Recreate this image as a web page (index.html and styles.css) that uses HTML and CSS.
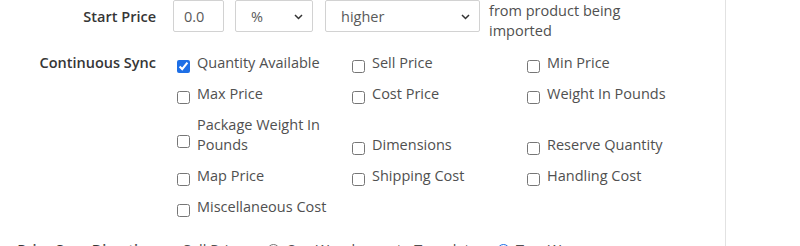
FILE: index.html
```html
<!DOCTYPE html>
<html>
<head>
<meta charset="utf-8">
<link rel="stylesheet" href="styles.css">
</head>
<body>
<div class="panel">
  <div class="row row-price">
    <div class="label label-tall">Start Price</div>
    <div class="controls">
      <input class="txt" type="text" value="0.0">
      <div class="sel sel-sm">
        <select><option>%</option></select>
        <svg class="chev" width="9" height="6" viewBox="0 0 9 6"><path d="M1 1l3.5 3.5L8 1" fill="none" stroke="#333" stroke-width="1.5"/></svg>
      </div>
      <div class="sel sel-lg">
        <select><option>higher</option></select>
        <svg class="chev" width="9" height="6" viewBox="0 0 9 6"><path d="M1 1l3.5 3.5L8 1" fill="none" stroke="#333" stroke-width="1.5"/></svg>
      </div>
      <div class="note">from product being imported</div>
    </div>
  </div>

  <div class="row row-sync">
    <div class="label">Continuous Sync</div>
    <div class="checks">
      <label class="chk"><input type="checkbox" checked><span>Quantity Available</span></label>
      <label class="chk"><input type="checkbox"><span>Sell Price</span></label>
      <label class="chk"><input type="checkbox"><span>Min Price</span></label>
      <label class="chk"><input type="checkbox"><span>Max Price</span></label>
      <label class="chk"><input type="checkbox"><span>Cost Price</span></label>
      <label class="chk"><input type="checkbox"><span>Weight In Pounds</span></label>
      <label class="chk chk-multi"><input type="checkbox"><span>Package Weight In Pounds</span></label>
      <label class="chk"><input type="checkbox"><span>Dimensions</span></label>
      <label class="chk"><input type="checkbox"><span>Reserve Quantity</span></label>
      <label class="chk"><input type="checkbox"><span>Map Price</span></label>
      <label class="chk"><input type="checkbox"><span>Shipping Cost</span></label>
      <label class="chk"><input type="checkbox"><span>Handling Cost</span></label>
      <label class="chk"><input type="checkbox"><span>Miscellaneous Cost</span></label>
    </div>
  </div>

  <div class="row row-dir">
    <div class="label">Price Sync Direction</div>
    <div class="radios">
      <span class="sub">Sell Price</span>
      <label class="rad rad-1"><input type="radio" name="dir"><span>Our Warehouse to Template</span></label>
      <label class="rad"><input type="radio" name="dir" checked><span>Two Way</span></label>
    </div>
  </div>
</div>
</body>
</html>
```

FILE: styles.css
```css
html, body {
  margin: 0;
  padding: 0;
  background: #fff;
  height: 246px;
  overflow: hidden;
}
body {
  font-family: "Open Sans", "Liberation Sans", sans-serif;
  font-size: 14.5px;
  color: #505050;
}
.panel {
  width: 726px;
  height: 246px;
  border-right: 1px solid #e2e2e2;
  box-sizing: border-box;
}
.row {
  display: grid;
  grid-template-columns: 156px 1fr;
  column-gap: 17px;
  align-items: start;
}
.label {
  text-align: right;
  font-weight: 600;
  font-size: 14.5px;
  color: #363636;
  line-height: 20px;
  white-space: nowrap;
}
.label-tall {
  line-height: 32px;
  padding-top: 1px;
}
.controls {
  display: flex;
  align-items: flex-start;
}
.txt {
  width: 51px;
  height: 32px;
  box-sizing: border-box;
  border: 1px solid #d2d2d2;
  border-radius: 2px;
  padding: 0 0 0 10px;
  font: inherit;
  color: #5a5a5a;
  margin: 0 11px 0 0;
  outline: none;
}
.sel {
  position: relative;
  height: 32px;
}
.sel select {
  appearance: none;
  -webkit-appearance: none;
  width: 100%;
  height: 32px;
  box-sizing: border-box;
  border: 1px solid #d2d2d2;
  border-radius: 2px;
  background: #fff;
  font: inherit;
  color: #5a5a5a;
  padding: 0 0 0 15px;
  margin: 0;
  outline: none;
}
.sel .chev {
  position: absolute;
  right: 10px;
  top: 14px;
  pointer-events: none;
}
.sel-sm {
  width: 78px;
  margin-right: 12px;
}
.sel-lg {
  width: 155px;
  margin-right: 9px;
}
.note {
  width: 150px;
  line-height: 19.5px;
  margin-top: 1px;
}
.row-sync {
  margin-top: 13px;
}
.checks {
  display: grid;
  grid-template-columns: repeat(3, 175px);
  row-gap: 11px;
  align-items: end;
}
.chk {
  display: flex;
  align-items: flex-end;
  gap: 7px;
  padding-left: 4px;
  line-height: 20px;
}
.chk input, .rad input {
  width: 13px;
  height: 13px;
  margin: 0;
  flex: none;
  accent-color: #1e6fe6;
}
.chk-multi input {
  margin-bottom: 7px;
}
.chk span {
  padding-right: 14px;
}
.row-dir {
  margin-top: 23px;
}
.radios {
  display: flex;
  align-items: center;
  line-height: 20px;
}
.sub {
  padding-left: 10px;
  box-sizing: border-box;
  width: 94px;
}
.rad {
  display: flex;
  align-items: center;
  gap: 6px;
}
.rad-1 {
  width: 230px;
}
```
